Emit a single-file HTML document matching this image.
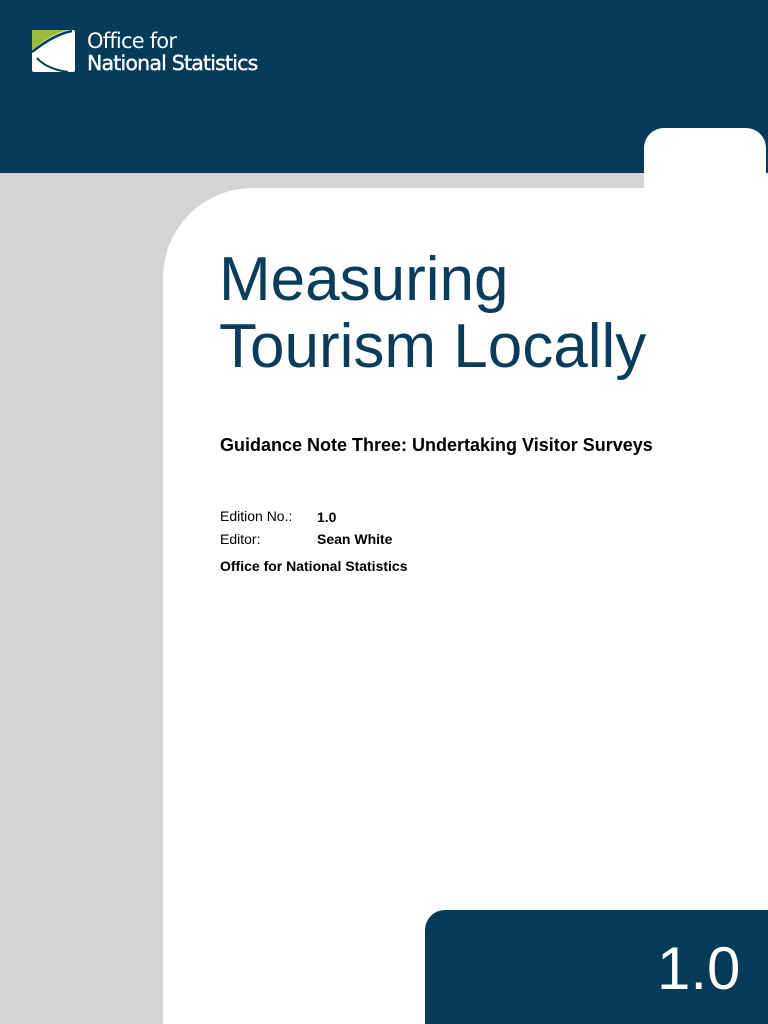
<!DOCTYPE html>
<html><head><meta charset="utf-8"><style>
*{margin:0;padding:0}
body{width:768px;height:1024px;position:relative;overflow:hidden;background:#fff;font-family:"Liberation Sans",Arial,sans-serif}
.hdr{position:absolute;left:0;top:0;width:768px;height:173px;background:#033b58}
.gray{position:absolute;left:0;top:173px;width:644px;height:851px;background:#d4d4d4}
.tab{position:absolute;left:644px;top:128px;width:122px;height:120px;background:#fff;border-radius:20px 20px 0 0}
.main{position:absolute;left:163px;top:188px;width:605px;height:836px;background:#fff;border-top-left-radius:90px}
.t{position:absolute;white-space:nowrap}
.bt{position:absolute;left:425px;top:910px;width:343px;height:114px;background:#033b58;border-top-left-radius:20px}
</style></head><body>
<div class="hdr"></div>
<div class="gray"></div>
<div class="tab"></div>
<div class="main"></div>
<svg style="position:absolute;left:32px;top:30px" width="43" height="42" viewBox="0 0 43 42">
<rect x="0" y="0" width="43" height="42" rx="2" fill="#fff"/>
<path d="M0 0 H36 C20 4 8 14 0 20 Z" fill="#9bbb3c"/>
<path d="M0 22 C10 14 24 4 40 1" stroke="#033b58" stroke-width="2.5" fill="none"/>
<path d="M5 28 C12 36 22 40 36 42" stroke="#033b58" stroke-width="2" fill="none"/>
</svg>
<div class="t" style="left:87px;top:29px;color:#fff;font-size:21px;font-family:'DejaVu Sans',sans-serif;letter-spacing:-0.8px">Office for</div>
<div class="t" style="left:87px;top:51px;color:#fff;font-size:20.5px;font-family:'DejaVu Sans',sans-serif;letter-spacing:-0.8px;-webkit-text-stroke:0.4px #fff">National Statistics</div>
<div class="t" style="left:219px;top:246px;color:#0a3d5c;font-size:62px;line-height:67px">Measuring<br>Tourism Locally</div>
<div class="t" style="left:220px;top:435px;font-size:18px;font-weight:bold;color:#000">Guidance Note Three: Undertaking Visitor Surveys</div>
<div class="t" style="left:220px;top:508px;font-size:14px">Edition No.:</div>
<div class="t" style="left:317px;top:509px;font-size:14px;font-weight:bold">1.0</div>
<div class="t" style="left:220px;top:531px;font-size:14px">Editor:</div>
<div class="t" style="left:317px;top:531px;font-size:14px;font-weight:bold">Sean White</div>
<div class="t" style="left:220px;top:558px;font-size:14px;font-weight:bold">Office for National Statistics</div>
<div class="bt"></div>
<div class="t" style="left:657px;top:937px;color:#fff;font-size:60px;line-height:64px">1.0</div>
</body></html>
